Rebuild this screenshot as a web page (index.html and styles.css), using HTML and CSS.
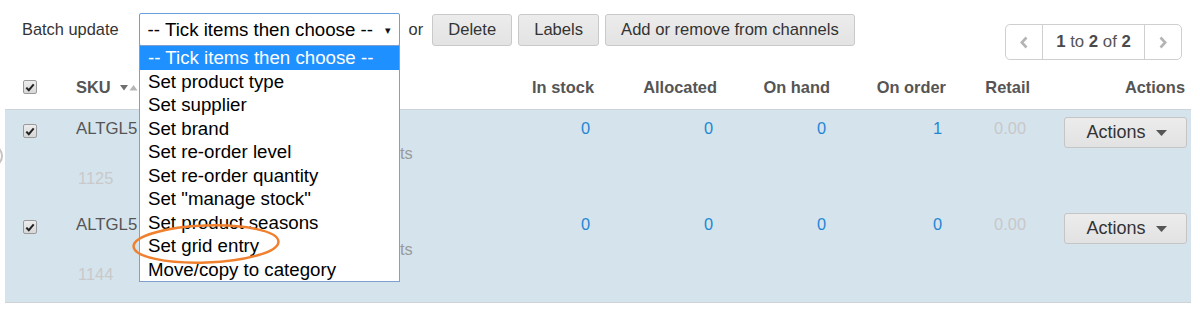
FILE: index.html
```html
<!DOCTYPE html>
<html>
<head>
<meta charset="utf-8">
<link rel="stylesheet" href="styles.css">
</head>
<body>
<div class="page">
  <div class="toolbar">
    <div class="batch">
      <span class="label">Batch update</span>
      <div class="select"><span>-- Tick items then choose --</span><span class="sel-arrow">&#9662;</span></div>
      <span class="or">or</span>
      <button class="btn">Delete</button>
      <button class="btn">Labels</button>
      <button class="btn">Add or remove from channels</button>
    </div>
    <div class="pager">
      <span class="pg pg-nav"><svg width="8" height="13" viewBox="0 0 8 13"><polyline points="6.5,1.5 1.8,6.5 6.5,11.5" fill="none" stroke="#b4b4b4" stroke-width="2.6"/></svg></span>
      <span class="pg pg-info"><b>1</b> to <b>2</b> of <b>2</b></span>
      <span class="pg pg-nav"><svg width="8" height="13" viewBox="0 0 8 13"><polyline points="1.5,1.5 6.2,6.5 1.5,11.5" fill="none" stroke="#b4b4b4" stroke-width="2.6"/></svg></span>
    </div>
  </div>

  <div class="table">
    <div class="row head">
      <div class="c c-check"><span class="cb"><svg width="10" height="9" viewBox="0 0 10 9"><polyline points="1.3,4.6 3.8,7.2 8.7,1.4" fill="none" stroke="#222" stroke-width="2"/></svg></span></div>
      <div class="c c-sku">SKU <svg class="sort" width="18" height="9" viewBox="0 0 18 9"><polygon points="0,2 8,2 4,7.5" fill="#6f6f6f"/><polygon points="9.5,7.5 17.5,7.5 13.5,2" fill="#b5b5b5"/></svg></div>
      <div class="c c-num">In stock</div>
      <div class="c c-num">Allocated</div>
      <div class="c c-num">On hand</div>
      <div class="c c-num">On order</div>
      <div class="c c-num">Retail</div>
      <div class="c c-act">Actions</div>
    </div>

    <div class="row item">
      <div class="c c-check"><span class="cb"><svg width="10" height="9" viewBox="0 0 10 9"><polyline points="1.3,4.6 3.8,7.2 8.7,1.4" fill="none" stroke="#222" stroke-width="2"/></svg></span></div>
      <div class="c c-sku">
        <div class="ln sku">ALTGL5</div>
        <div class="ln name">ts</div>
        <div class="ln code">1125</div>
      </div>
      <div class="c c-num"><a class="num">0</a></div>
      <div class="c c-num"><a class="num">0</a></div>
      <div class="c c-num"><a class="num">0</a></div>
      <div class="c c-num"><a class="num">1</a></div>
      <div class="c c-num"><span class="retail">0.00</span></div>
      <div class="c c-act"><button class="act-btn">Actions <svg width="11" height="6" viewBox="0 0 11 6"><polygon points="0,0 11,0 5.5,6" fill="#555"/></svg></button></div>
    </div>

    <div class="row item last">
      <div class="c c-check"><span class="cb"><svg width="10" height="9" viewBox="0 0 10 9"><polyline points="1.3,4.6 3.8,7.2 8.7,1.4" fill="none" stroke="#222" stroke-width="2"/></svg></span></div>
      <div class="c c-sku">
        <div class="ln sku">ALTGL5</div>
        <div class="ln name">ts</div>
        <div class="ln code">1144</div>
      </div>
      <div class="c c-num"><a class="num">0</a></div>
      <div class="c c-num"><a class="num">0</a></div>
      <div class="c c-num"><a class="num">0</a></div>
      <div class="c c-num"><a class="num">0</a></div>
      <div class="c c-num"><span class="retail">0.00</span></div>
      <div class="c c-act"><button class="act-btn">Actions <svg width="11" height="6" viewBox="0 0 11 6"><polygon points="0,0 11,0 5.5,6" fill="#555"/></svg></button></div>
    </div>
  </div>

  <ul class="dropdown">
    <li class="hl">-- Tick items then choose --</li>
    <li>Set product type</li>
    <li>Set supplier</li>
    <li>Set brand</li>
    <li>Set re-order level</li>
    <li>Set re-order quantity</li>
    <li>Set "manage stock"</li>
    <li>Set product seasons</li>
    <li>Set grid entry</li>
    <li>Move/copy to category</li>
  </ul>

  <svg class="mark" width="1200" height="312" viewBox="0 0 1200 312">
    <ellipse cx="206" cy="244" rx="72.5" ry="18.5" transform="rotate(-2 206 244)" fill="none" stroke="#f0802e" stroke-width="2.5"/>
  </svg>
  <span class="edge"></span>
</div>
</body>
</html>
```

FILE: styles.css
```css
* { box-sizing: border-box; }

html, body {
  margin: 0;
  padding: 0;
  background: #fff;
}

body {
  font-family: "Liberation Sans", Arial, sans-serif;
  font-size: 16.4px;
  color: #333;
  overflow: hidden;
}

.page {
  position: relative;
  width: 1200px;
  height: 312px;
}

/* toolbar */
.toolbar {
  display: flex;
  justify-content: space-between;
  align-items: flex-start;
  height: 65px;
  padding: 13px 18px 0 22px;
}

.batch {
  display: flex;
  align-items: center;
  height: 33px;
}

.label {
  color: #333;
}

.select {
  margin-left: 20px;
  width: 261px;
  height: 33px;
  border: 1px solid #6a9fe0;
  border-radius: 2px;
  background: #fff;
  display: flex;
  align-items: center;
  justify-content: space-between;
  padding: 0 8px 0 8px;
  font-size: 18.7px;
  color: #000;
}

.sel-arrow {
  font-size: 11px;
  color: #111;
  margin-top: 1px;
}

.or {
  margin-left: 9px;
  margin-right: 9px;
  color: #333;
}

.btn {
  font-family: inherit;
  font-size: 16.6px;
  color: #333;
  height: 32px;
  padding: 0 15px;
  margin-right: 6px;
  border: 1px solid #c9c9c9;
  border-radius: 3px;
  background: linear-gradient(#ececec, #e3e3e3);
}

/* pager */
.pager {
  margin-top: 11px;
  display: flex;
  height: 36px;
  border: 1px solid #cfcfcf;
  border-radius: 5px;
  background: #fff;
}

.pg {
  display: flex;
  align-items: center;
  justify-content: center;
}

.pg-nav {
  width: 36px;
}

.pg-info {
  width: 103px;
  border-left: 1px solid #cfcfcf;
  border-right: 1px solid #cfcfcf;
  color: #555;
  white-space: pre;
  font-size: 16.8px;
}

.pg-info b {
  font-weight: bold;
  color: #4a4a4a;
}

/* table */
.table {
  margin-left: 5px;
  width: 1186px;
}

.row {
  display: grid;
  grid-template-columns: 55px 440px 98px 123px 113px 116px 84px 157px;
}

.head {
  height: 45px;
  align-items: center;
  border-bottom: 1px solid #cdd3d8;
  font-weight: bold;
  color: #555;
}

.item {
  height: 96px;
  background: #d5e3ed;
  align-items: start;
}

.item.last {
  height: 97px;
  border-bottom: 1px solid #cfd3d6;
}

.c-check {
  padding-left: 18px;
}

.item .c-check {
  padding-top: 14px;
}

.cb {
  display: flex;
  align-items: center;
  justify-content: center;
  width: 14px;
  height: 14px;
  border: 1px solid #9a9a9a;
  border-radius: 2px;
  background: linear-gradient(#ededed, #d7d7d7);
}

.c-sku {
  padding-left: 16px;
  display: flex;
  align-items: center;
}

.item .c-sku {
  display: block;
  padding-top: 6px;
}

.sort {
  margin-left: 9px;
  margin-top: 1px;
}

.ln {
  line-height: 25px;
  white-space: nowrap;
}

.sku {
  color: #555;
  font-size: 16.8px;
}

.name {
  padding-left: 324px;
  color: #9a9a9a;
}

.code {
  color: #c9c9c9;
  padding-left: 2px;
}

.c-num {
  text-align: right;
  padding-right: 4px;
}

.item .c-num {
  padding-right: 8px;
  padding-top: 6px;
  line-height: 25px;
}

.num {
  color: #1f87d2;
}

.retail {
  color: #c8c8c8;
}

.c-act {
  text-align: right;
  padding-right: 6px;
}

.item .c-act {
  padding-top: 7px;
  padding-right: 4px;
}

.act-btn {
  font-family: inherit;
  font-size: 18px;
  color: #333;
  width: 123px;
  height: 31px;
  border: 1px solid #c5c5c5;
  border-radius: 3px;
  background: linear-gradient(#ececec, #e2e2e2);
  display: inline-flex;
  align-items: center;
  justify-content: center;
  gap: 10px;
  padding: 0 0 0 2px;
}

/* open dropdown list */
.dropdown {
  position: absolute;
  left: 139px;
  top: 45px;
  width: 261px;
  margin: 0;
  padding: 0;
  list-style: none;
  background: #fff;
  border: 1px solid #7f9fcf;
  font-size: 18.7px;
  color: #000;
}

.dropdown li {
  height: 23.5px;
  line-height: 23.5px;
  padding-left: 8px;
  white-space: nowrap;
}

.dropdown li.hl {
  background: #1e90ff;
  color: #fff;
}

.mark {
  position: absolute;
  left: 0;
  top: 0;
  pointer-events: none;
}

.edge {
  position: absolute;
  left: -14px;
  top: 146px;
  width: 17px;
  height: 20px;
  border: 2px solid #c4c4c4;
  border-radius: 50%;
}
```
